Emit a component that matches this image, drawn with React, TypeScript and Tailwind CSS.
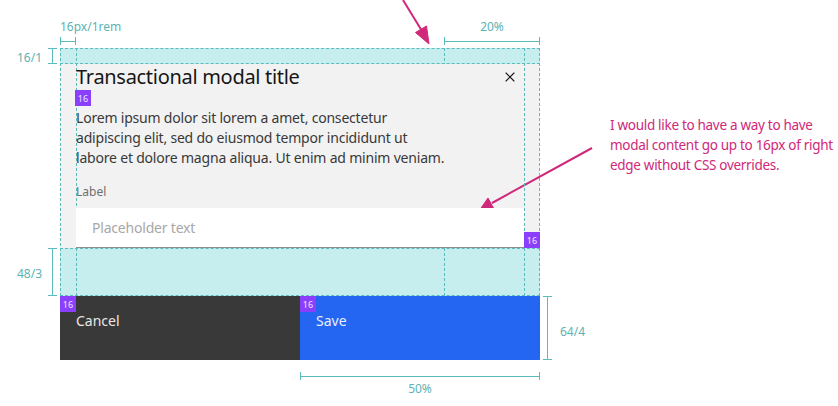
import { X } from 'lucide-react';

const PINK = '#d0287a';

function Badge({ className = '' }: { className?: string }) {
  return (
    <span
      className={`absolute z-20 flex h-4 w-4 items-center justify-center bg-[#8a3ffc] text-[9px] leading-none text-[#f0e8ff] ${className}`}
    >
      16
    </span>
  );
}

// horizontal dimension bracket |---|
function HBracket({ className = '' }: { className?: string }) {
  return (
    <div className={`flex h-2 items-center border-x border-[#5cbcbc] ${className}`}>
      <div className="h-px w-full bg-[#5cbcbc]" />
    </div>
  );
}

// vertical dimension bracket, stretches to its row
function VBracket() {
  return (
    <div className="flex w-[9px] justify-center border-y border-[#5cbcbc]">
      <div className="w-px bg-[#5cbcbc]" />
    </div>
  );
}

function Dim({ children }: { children: string }) {
  return <span className="whitespace-nowrap text-[12px] leading-[18px] text-[#5cb3b3]">{children}</span>;
}

// pink callout arrows
function Arrows() {
  return (
    <svg className="pointer-events-none absolute inset-0" width="838" height="406" fill="none">
      <g stroke={PINK} strokeWidth="2" fill={PINK}>
        <path d="M403 0l19 31" />
        <path d="M429 44l-13.5-11.5 11-6.5z" strokeWidth="1" />
        <path d="M592 148l-100 55" />
        <path d="M479 211l9-13 6 11z" strokeWidth="1" />
      </g>
    </svg>
  );
}

function Modal() {
  return (
    <div className="relative">
      {/* layout grid lines */}
      <div className="pointer-events-none absolute left-0 top-0 z-10 h-[248px] border-l border-dashed border-[#5cbcbc]" />
      <div className="pointer-events-none absolute left-[16px] top-0 z-10 h-[248px] border-l border-dashed border-[#5cbcbc]" />
      <div className="pointer-events-none absolute left-[384px] top-0 z-0 h-[248px] border-l border-dashed border-[#5cbcbc]" />
      <div className="pointer-events-none absolute left-[464px] top-0 z-10 h-[248px] border-l border-dashed border-[#5cbcbc]" />
      <div className="pointer-events-none absolute left-[479px] top-0 z-10 h-[248px] border-l border-dashed border-[#5cbcbc]" />

      <div className="h-4 border-y border-dashed border-[#5cbcbc] bg-[#c6eeee]" />

      <div className="relative h-[184px] bg-[#f2f2f2] px-4">
        <button className="absolute right-[22px] top-[5px] z-20 text-[#161616]">
          <X className="h-4 w-4" strokeWidth={1.6} />
        </button>
        <h3 className="relative z-10 h-[26px] text-[20px] leading-[26px] tracking-[-0.3px] text-[#161616]">
          Transactional modal title
        </h3>
        <div className="relative h-[18px]">
          <Badge className="-left-px top-0" />
        </div>
        <p className="relative z-10 whitespace-nowrap text-[14px] leading-5 tracking-[-0.2px] text-[#393939]">
          Lorem ipsum dolor sit lorem a amet, consectetur
          <br />
          adipiscing elit, sed do eiusmod tempor incididunt ut
          <br />
          labore et dolore magna aliqua. Ut enim ad minim veniam.
        </p>
        <label className="relative z-10 mt-4 block text-[12px] leading-4 text-[#6f6f6f]">Label</label>
        <div className="relative z-10 mt-2 flex h-10 items-center border-b border-[#8d8d8d] bg-white pl-4 text-[14px] tracking-[-0.2px] text-[#a8a8a8]">
          Placeholder text
        </div>
        <Badge className="bottom-0 right-0" />
      </div>

      <div className="h-12 border-y border-dashed border-[#5cbcbc] bg-[#c6eeee]" />

      <div className="flex h-16 text-[14px] leading-[18px]">
        <div className="relative w-1/2 bg-[#393939] pl-4 pt-4 text-[#e8e8e8]">
          <Badge className="left-0 top-0" />
          Cancel
        </div>
        <div className="relative w-1/2 bg-[#2465f2] pl-4 pt-4 text-[#e8eeff]">
          <Badge className="left-0 top-0" />
          Save
        </div>
      </div>
    </div>
  );
}

export default function App() {
  return (
    <div
      className="relative grid h-[406px] w-[838px] grid-cols-[60px_480px_1fr] grid-rows-[48px_248px_64px_1fr] overflow-hidden bg-white"
      style={{ fontFamily: '"Noto Sans", "Open Sans", sans-serif' }}
    >
      {/* top dimension row */}
      <div />
      <div className="flex justify-between pt-[18px]">
        <div className="flex w-4 flex-col">
          <Dim>16px/1rem</Dim>
          <HBracket className="mt-px" />
        </div>
        <div className="flex w-24 flex-col items-center">
          <Dim>20%</Dim>
          <HBracket className="mt-px w-full" />
        </div>
      </div>
      <div />

      {/* left dimensions */}
      <div className="flex flex-col justify-between">
        <div className="flex h-4 justify-end gap-[6px] pr-[3px]">
          <span className="self-center">
            <Dim>16/1</Dim>
          </span>
          <VBracket />
        </div>
        <div className="flex h-12 justify-end gap-[6px] pr-[3px]">
          <span className="self-center">
            <Dim>48/3</Dim>
          </span>
          <VBracket />
        </div>
      </div>

      <div className="row-span-2">
        <Modal />
      </div>

      <div className="pl-[70px] pt-[67px]">
        <p className="whitespace-nowrap text-[13.5px] leading-5 tracking-[-0.3px] text-[#d0287a]">
          I would like to have a way to have
          <br />
          modal content go up to 16px of right
          <br />
          edge without CSS overrides.
        </p>
      </div>

      <div />
      <div className="flex gap-2 pl-[3px]">
        <VBracket />
        <span className="self-center pt-1">
          <Dim>64/4</Dim>
        </span>
      </div>

      {/* bottom dimension row */}
      <div />
      <div className="flex justify-end pt-3">
        <div className="flex w-1/2 flex-col items-center">
          <HBracket className="w-full" />
          <Dim>50%</Dim>
        </div>
      </div>
      <div />

      <Arrows />
    </div>
  );
}
